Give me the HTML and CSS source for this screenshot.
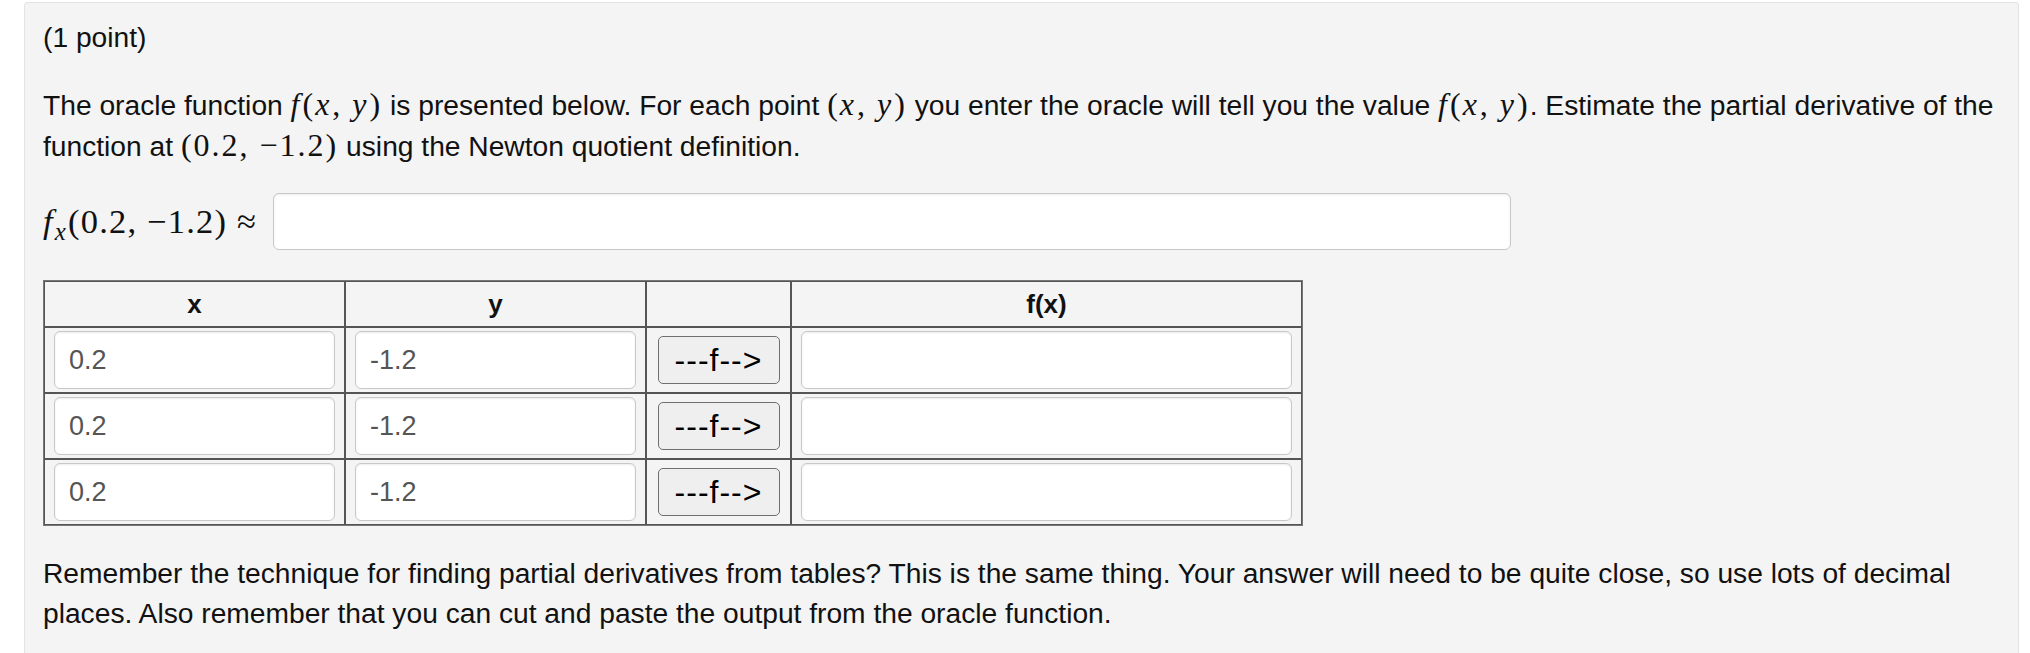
FILE: index.html
```html
<!DOCTYPE html>
<html lang="en">

<head>
    <meta charset="UTF-8">
    <title>Oracle function</title>
    <link rel="stylesheet" href="styles.css">
</head>

<body>
    <main class="problem">
        <p class="points">(1 point)</p>
        <p class="text">The oracle function <span class="math"><i>f</i>(<i>x</i>, <i>y</i>)</span> is presented below. For each point <span class="math">(<i>x</i>, <i>y</i>)</span> you enter the oracle will tell you the value <span class="math"><i>f</i>(<i>x</i>, <i>y</i>)</span>. Estimate the partial derivative of the function at <span class="math">(0.2, &minus;1.2)</span> using the Newton quotient definition.</p>

        <div class="answer">
            <span class="math big"><i>f</i><sub><i>x</i></sub>(0.2, &minus;1.2) &asymp;</span>
            <input class="answer-input" type="text">
        </div>

        <table class="oracle">
            <colgroup>
                <col class="col-x">
                <col class="col-y">
                <col class="col-btn">
                <col class="col-out">
            </colgroup>
            <tr>
                <th>x</th>
                <th>y</th>
                <th></th>
                <th>f(x)</th>
            </tr>
            <tr>
                <td><input type="text" value="0.2"></td>
                <td><input type="text" value="-1.2"></td>
                <td><button type="button">---f--&gt;</button></td>
                <td><input type="text"></td>
            </tr>
            <tr>
                <td><input type="text" value="0.2"></td>
                <td><input type="text" value="-1.2"></td>
                <td><button type="button">---f--&gt;</button></td>
                <td><input type="text"></td>
            </tr>
            <tr>
                <td><input type="text" value="0.2"></td>
                <td><input type="text" value="-1.2"></td>
                <td><button type="button">---f--&gt;</button></td>
                <td><input type="text"></td>
            </tr>
        </table>

        <p class="text note">Remember the technique for finding partial derivatives from tables? This is the same thing. Your answer will need to be quite close, so use lots of decimal places. Also remember that you can cut and paste the output from the oracle function.</p>
    </main>
</body>

</html>
```

FILE: styles.css
```css
body {
    margin: 0;
    background: #fff;
    font-family: "Liberation Sans", Arial, sans-serif;
    font-size: 28.2px;
    color: #111;
}

.problem {
    margin: 2px 11px 0 24px;
    padding: 14px 10px 40px 18px;
    background-color: #f4f4f4;
    border: 1px solid #e3e3e3;
    border-bottom: none;
    border-radius: 4px 4px 0 0;
}

.problem p {
    margin: 0;
    line-height: 40px;
}

.text {
    margin-top: 27px !important;
}

.math {
    font-family: "Liberation Serif", "Times New Roman", serif;
    font-size: 32px;
    letter-spacing: 2px;
}

.math i {
    padding-right: 1px;
}

.math sub {
    font-size: 72%;
    vertical-align: -7px;
    line-height: 0;
}

.answer {
    display: flex;
    align-items: center;
    gap: 16px;
    margin-top: 27px;
}

.math.big {
    font-size: 34.5px;
    letter-spacing: 1.2px;
    white-space: nowrap;
}

.answer-input {
    width: 1238px;
    height: 57px;
}

input {
    box-sizing: border-box;
    height: 58px;
    width: 100%;
    padding: 0 14px;
    font-family: "Liberation Sans", Arial, sans-serif;
    font-size: 27px;
    color: #555;
    background: #fff;
    border: 1px solid #c8c8c8;
    border-radius: 6px;
    box-shadow: inset 0 1px 2px rgba(0, 0, 0, 0.08);
}

.oracle {
    margin-top: 30px;
    width: 1258px;
    table-layout: fixed;
    border-collapse: separate;
    border-spacing: 0;
    border: 1px solid #777;
}

.col-x,
.col-y {
    width: 301px;
}

.col-btn {
    width: 145px;
}

.col-out {
    width: 511px;
}

.oracle th,
.oracle td {
    border: 1px solid #555;
}

.oracle th {
    height: 44px;
    padding: 0;
    font-weight: bold;
    font-size: 26px;
}

.oracle td {
    padding: 3px 9px;
    text-align: center;
}

button {
    width: 122px;
    height: 48px;
    padding: 0;
    font-family: "Liberation Sans", Arial, sans-serif;
    font-size: 32px;
    letter-spacing: 1px;
    color: #000;
    background-color: #efefef;
    border: 1px solid #6f6f6f;
    border-radius: 5px;
}

.note {
    margin-top: 27px !important;
}
```
